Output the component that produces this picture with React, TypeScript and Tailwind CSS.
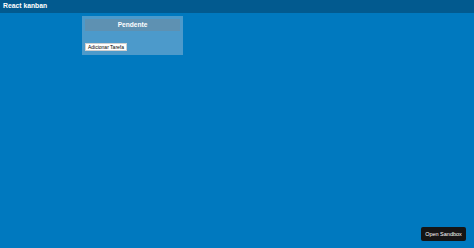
export default function App() {
  return (
    <div
      className="relative h-[248px] w-full overflow-hidden bg-[#0079bf]"
      style={{ fontFamily: '"Liberation Sans", Arial, sans-serif' }}
    >
      <header className="flex h-[13px] items-center bg-[#025a8f] px-[3px]">
        <h1 className="text-[6.8px] leading-none font-bold text-white">React kanban</h1>
      </header>

      <div className="flex pl-[82px] pt-[3px]">
        <div className="flex w-[101px] flex-col bg-[#4c9acb] p-[3px] pb-[4px]">
          <div className="flex h-[12px] items-center justify-center bg-[#5e91b2]">
            <span className="text-[6.6px] leading-none font-bold text-white">Pendente</span>
          </div>
          <div className="h-[12px]" />
          <button className="flex h-[8px] w-[42px] items-center justify-center border border-[#d0d0d0] bg-white text-[5px] leading-none text-black">
            Adicionar Tarefa
          </button>
        </div>
      </div>

      <button className="absolute right-[8px] bottom-[7px] flex h-[14px] w-[45px] items-center justify-center rounded-[2px] bg-[#151515] text-[5.5px] text-white">
        Open Sandbox
      </button>
    </div>
  );
}
